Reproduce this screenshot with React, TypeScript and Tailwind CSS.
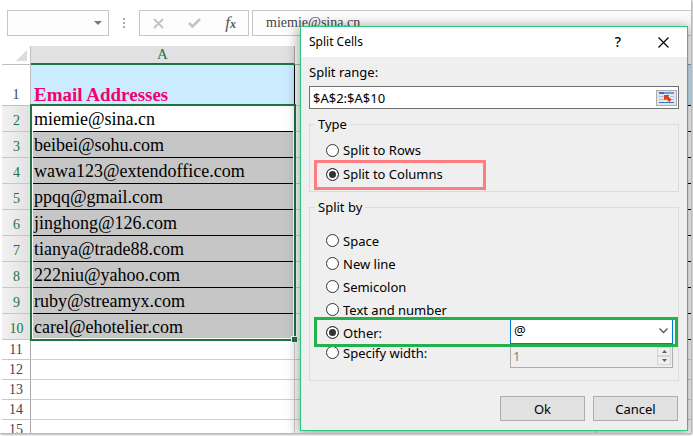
import type { ReactNode } from "react";

const emails = [
  "miemie@sina.cn",
  "beibei@sohu.com",
  "wawa123@extendoffice.com",
  "ppqq@gmail.com",
  "jinghong@126.com",
  "tianya@trade88.com",
  "222niu@yahoo.com",
  "ruby@streamyx.com",
  "carel@ehotelier.com",
];

const emptyRows = [11, 12, 13, 14, 15];

function FormulaBar() {
  return (
    <div className="flex h-[46px] items-start pt-[10px] pl-[7px]">
      <button
        aria-label="Name box"
        className="flex h-[26px] w-[102px] shrink-0 items-center justify-end border border-[#c6c6c6] bg-[#fdfdfd] pr-[6px]"
      >
        <svg width="8" height="4" viewBox="0 0 8 4">
          <path d="M0 0h8L4 4z" fill="#777" />
        </svg>
      </button>
      <div className="flex h-[26px] w-[30px] shrink-0 flex-col items-center justify-center gap-[2px]">
        <span className="size-[2px] bg-[#aaa]" />
        <span className="size-[2px] bg-[#aaa]" />
        <span className="size-[2px] bg-[#aaa]" />
      </div>
      <div className="flex h-[26px] w-[110px] shrink-0 items-center justify-between border border-[#c6c6c6] bg-[#fdfdfd] pr-[12px] pl-[13px]">
        <button aria-label="Cancel entry">
          <svg width="11" height="11" viewBox="0 0 11 11" fill="none" stroke="#c4c4c4" strokeWidth="2">
            <path d="M1 1l9 9M10 1l-9 9" />
          </svg>
        </button>
        <button aria-label="Confirm entry">
          <svg width="13" height="10" viewBox="0 0 13 10" fill="none" stroke="#c4c4c4" strokeWidth="2.600">
            <path d="M1 5l3.500 3.500L12 1" />
          </svg>
        </button>
        <button
          aria-label="Insert function"
          className="font-['Liberation_Serif',serif] text-[17px] leading-[20px] text-[#555] italic"
        >
          f<span className="text-[12px] font-bold">x</span>
        </button>
      </div>
      <input
        aria-label="Formula"
        readOnly
        value="miemie@sina.cn"
        className="ml-[3px] h-[26px] min-w-0 flex-1 border border-r-0 border-[#c6c6c6] bg-[#fdfdfd] pl-[13px] font-['Liberation_Serif',serif] text-[14px] text-[#444] outline-none"
      />
    </div>
  );
}

function Sheet() {
  return (
    <div className="relative pl-[2px]">
      <table className="w-full table-fixed border-separate border-spacing-0 text-left font-['Liberation_Serif',serif]">
        <colgroup>
          <col className="w-[29px]" />
          <col className="w-[264px]" />
          <col className="w-[302px]" />
          <col />
        </colgroup>
        <thead>
          <tr className="h-[19px]">
            <th className="border-r border-b border-[#c0c0c0] p-0" aria-label="Select all">
              <svg width="11" height="11" viewBox="0 0 11 11" className="mr-[3px] ml-auto">
                <path d="M11 0v11H0z" fill="#dcdcdc" />
              </svg>
            </th>
            <th className="border-r border-b-2 border-r-[#b0b0b0] border-b-[#217346] bg-[#e1e1e1] p-0 text-center text-[15px] leading-[17px] font-normal text-[#217346]">
              A
            </th>
            <th className="border-r border-b border-[#b8b8b8] p-0" />
            <th className="border-b border-[#999] p-0" />
          </tr>
        </thead>
        <tbody>
          <tr className="h-[41px]">
            <th className="border-r border-b border-[#c0c0c0] p-0 pb-[3px] text-center align-bottom text-[14px] leading-[14px] font-normal text-[#444]">
              1
            </th>
            <td className="border-r border-black bg-[#cbebff] p-0 pb-[1px] pl-[3px] align-bottom text-[19px] leading-[20px] font-bold text-[#f5006e]">
              Email Addresses
            </td>
            <td className="border-r border-b border-[#d0d0d0] p-0" />
            <td className="border-b border-black bg-[#cbebff] p-0" />
          </tr>
          {emails.map((email, i) => (
            <tr key={email} className="h-[26px]">
              <th className="border-b border-[#c6c6c6] bg-linear-to-r from-[#f2f2f2] to-[#e1e1e1] p-0 pt-[4px] text-center text-[14px] leading-[20px] font-normal text-[#217346]">
                {i + 2}
              </th>
              <td
                className={`border-b border-black p-0 pt-[1px] pl-[3px] text-[18px] leading-[24px] text-black ${
                  i === 0 ? "bg-white" : "bg-[#c6c6c6]"
                }`}
              >
                {email}
              </td>
              <td className="border-r border-b border-[#d0d0d0] p-0" />
              <td className="border-b border-black p-0" />
            </tr>
          ))}
          {emptyRows.map((n) => (
            <tr key={n} className="h-[20px]">
              <th className="border-r border-b border-[#c8c8c8] border-r-[#a8a8a8] p-0 text-center text-[14px] leading-[19px] font-normal text-[#444]">
                {n}
              </th>
              <td className="border-r border-b border-[#d0d0d0] p-0" />
              <td className="border-r border-b border-[#d0d0d0] p-0" />
              <td className="border-b border-[#d0d0d0] p-0" />
            </tr>
          ))}
        </tbody>
      </table>

      {/* Selected range with its fill handle */}
      <div className="pointer-events-none absolute top-[58px] left-[30px] h-[237px] w-[266px] border-2 border-[#217346] shadow-[inset_0_0_0_1px_white]">
        <span className="absolute -right-[4px] -bottom-[4px] size-[7px] border border-white bg-[#217346]" />
      </div>
    </div>
  );
}

interface RadioProps {
  name: string;
  label: string;
  checked?: boolean;
}

function Radio({ name, label, checked }: RadioProps) {
  return (
    <label className="flex items-center gap-[4px]">
      <input
        type="radio"
        name={name}
        defaultChecked={checked}
        className="size-[13px] shrink-0 appearance-none rounded-full border border-[#333] bg-white checked:bg-[#333] checked:shadow-[inset_0_0_0_2px_white]"
      />
      {label}
    </label>
  );
}

function Group({ title, children }: { title: string; children: ReactNode }) {
  return (
    <fieldset className="min-w-0 border border-[#dcdcdc] pl-[16px]">
      <legend className="-ml-[11px] px-[3px] leading-[18px]">{title}</legend>
      {children}
    </fieldset>
  );
}

function RangeIcon() {
  return (
    <svg width="15" height="11" viewBox="0 0 15 11">
      <rect width="15" height="11" fill="#dce8f6" />
      <rect width="5" height="2" fill="#3f6fc0" />
      <rect x="5" width="10" height="2" fill="#6f9bdc" />
      <path d="M0 4.500h15M0 7.500h15" stroke="#a9c3e6" />
      <path d="M0 10.500h15" stroke="#3f6fb5" />
      <path d="M5.500 2v8M10.500 2v8" stroke="#fff" />
      <path d="M5 3h5.500L9.500 4.500l3 3-2 2.500-3.500-3L5 8.500z" fill="#e0401c" />
    </svg>
  );
}

function SplitCellsDialog() {
  return (
    <section
      role="dialog"
      aria-label="Split Cells"
      className="absolute top-[26px] right-[3px] left-[300px] border border-[#2bc77e] bg-[#efefef] font-['Noto_Sans',sans-serif] text-[13px] leading-[18px] text-black shadow-[0_2px_12px_2px_rgba(0,0,0,0.35)]"
    >
      <header className="flex h-[30px] items-center bg-white pl-[8px] text-[12px]">
        <h1 className="flex-1">Split Cells</h1>
        <button aria-label="Help" className="w-[20px] text-[14px] font-medium">
          ?
        </button>
        <button aria-label="Close" className="mr-[18px] ml-[30px]">
          <svg width="11" height="11" viewBox="0 0 11 11" fill="none" stroke="#000" strokeWidth="1.200">
            <path d="M.5.5l10 10M10.500.5l-10 10" />
          </svg>
        </button>
      </header>

      <div className="px-[8px] pt-[6px] pb-[9px]">
        <label htmlFor="range">Split range:</label>
        <div className="mt-[5px] flex h-[23px] items-center border border-[#707070] bg-white pr-[1px]">
          <input
            id="range"
            defaultValue="$A$2:$A$10"
            className="min-w-0 flex-1 pl-[3px] outline-none"
          />
          <button
            aria-label="Pick range"
            className="flex h-[16px] w-[21px] items-center justify-center border border-[#adadad] bg-[#e4e4e4]"
          >
            <RangeIcon />
          </button>
        </div>

        <div className="mt-[6px]">
          <Group title="Type">
            <div className="pt-[5px] pb-[5px]">
              <div className="flex h-[24px] items-center">
                <Radio name="type" label="Split to Rows" />
              </div>
              <div className="relative flex h-[24px] items-center">
                <Radio name="type" label="Split to Columns" checked />
                <div className="pointer-events-none absolute -top-[2px] -left-[12px] h-[30px] w-[172px] border-[3px] border-[#ff7c80]" />
              </div>
            </div>
          </Group>
        </div>

        <div className="mt-[6px]">
          <Group title="Split by">
            <div className="pt-[13px] pb-[12px]">
              {["Space", "New line", "Semicolon", "Text and number"].map((label) => (
                <div key={label} className="flex h-[23px] items-center">
                  <Radio name="split-by" label={label} />
                </div>
              ))}
              <div className="relative flex h-[23px] items-end justify-between pr-[5px]">
                <div className="flex h-[23px] items-center">
                  <Radio name="split-by" label="Other:" checked />
                </div>
                <div className="relative h-[24px] w-[163px]">
                  <select
                    aria-label="Other separator"
                    className="h-full w-full appearance-none border border-t-0 border-[#0078d7] bg-white pb-[4px] pl-[3px] leading-[18px] outline-none"
                  >
                    <option>@</option>
                  </select>
                  <svg
                    width="9"
                    height="6"
                    viewBox="0 0 9 6"
                    fill="none"
                    stroke="#555"
                    strokeWidth="1.300"
                    className="pointer-events-none absolute top-[8px] right-[5px]"
                  >
                    <path d="M.5.5l4 4 4-4" />
                  </svg>
                </div>
                <div className="pointer-events-none absolute -top-[4px] right-0 -bottom-[3px] -left-[12px] border-[3px] border-[#22b14c]" />
              </div>
              <div className="flex items-start justify-between pr-[5px]">
                <div className="flex h-[17px] items-center">
                  <Radio name="split-by" label="Specify width:" />
                </div>
                <div className="flex h-[24px] w-[163px] items-center border border-t-0 border-[#abadb3] pr-[1px]">
                  <input
                    aria-label="Width"
                    disabled
                    defaultValue="1"
                    className="min-w-0 flex-1 pl-[2px] text-[#838383]"
                  />
                  <div className="flex flex-col pt-[1px]">
                    <button aria-label="Increase" disabled className="flex h-[9px] w-[14px] items-center justify-center border border-[#d6d6d6]">
                      <svg width="5" height="3" viewBox="0 0 5 3">
                        <path d="M0 3h5L2.500 0z" fill="#606060" />
                      </svg>
                    </button>
                    <button aria-label="Decrease" disabled className="flex h-[9px] w-[14px] items-center justify-center border border-[#d6d6d6]">
                      <svg width="5" height="3" viewBox="0 0 5 3">
                        <path d="M0 0h5L2.500 3z" fill="#606060" />
                      </svg>
                    </button>
                  </div>
                </div>
              </div>
            </div>
          </Group>
        </div>

        <div className="mt-[15px] flex justify-end gap-[8px] pr-[1px]">
          <button className="h-[25px] w-[85px] border border-[#adadad] bg-[#e1e1e1]">Ok</button>
          <button className="h-[25px] w-[85px] border border-[#adadad] bg-[#e1e1e1]">Cancel</button>
        </div>
      </div>
    </section>
  );
}

export default function App() {
  return (
    <div className="h-screen bg-white pr-[2px] pb-[3px]">
      <main className="relative h-full overflow-hidden bg-white shadow-[1px_1px_3px_rgba(0,0,0,0.5)] outline-1 outline-[#b9b9b9]">
        <FormulaBar />
        <Sheet />
        <SplitCellsDialog />
      </main>
    </div>
  );
}
